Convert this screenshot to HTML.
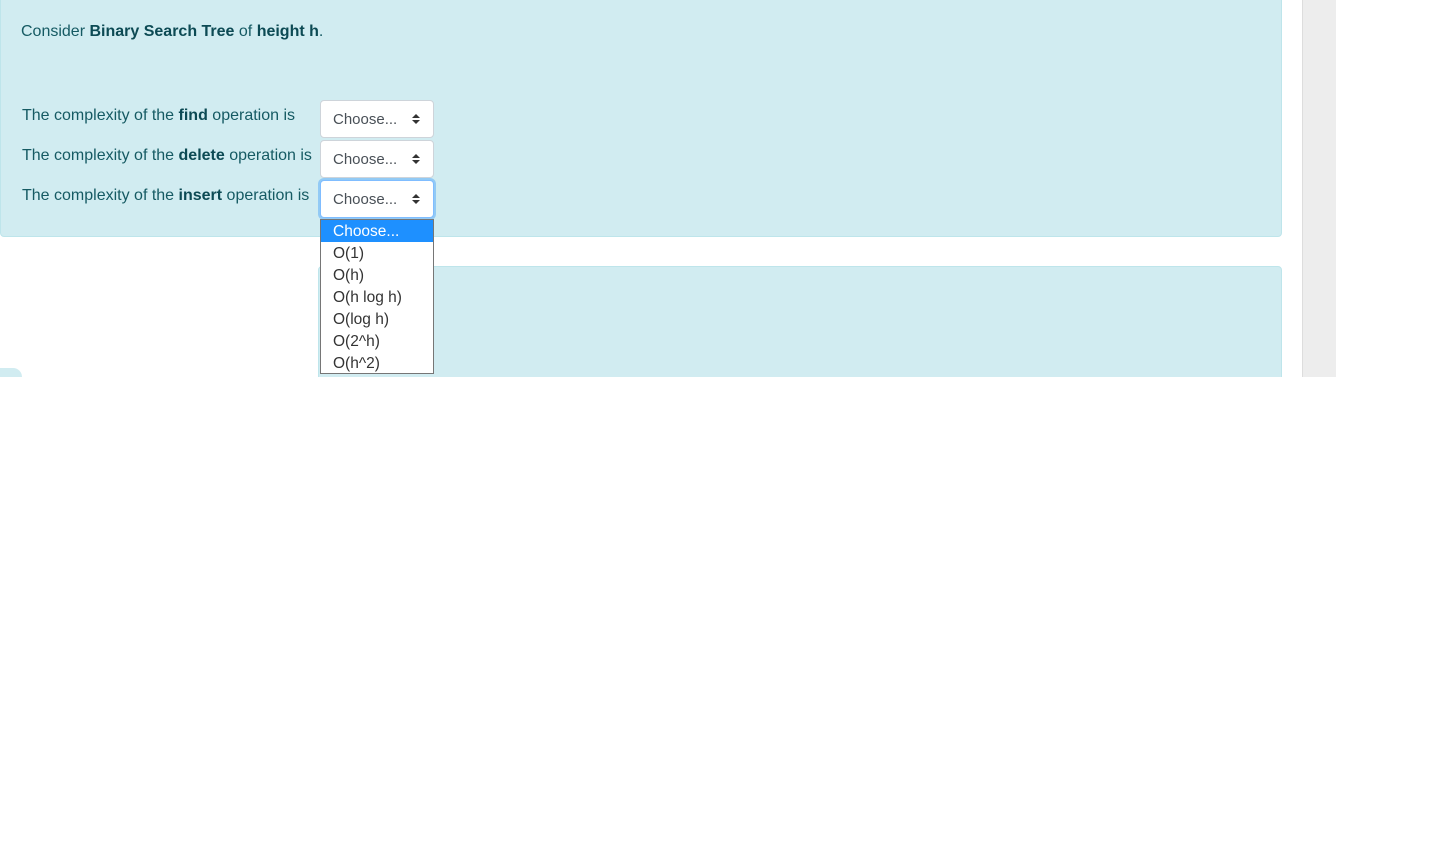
<!DOCTYPE html>
<html><head><style>
body{margin:0;width:1439px;height:853px;background:#fff;font-family:"Liberation Sans",sans-serif;position:relative;overflow:hidden}
.box{position:absolute;background:#d1ecf1;border:1px solid #bee5eb;border-radius:4px;box-sizing:border-box}
.t{position:absolute;color:#155a63;font-size:16px;white-space:nowrap}
.t b{color:#0c4a54}
.sel{position:absolute;left:320px;width:114px;height:38px;background:#fff;border:1px solid #ced4da;border-radius:4px;box-sizing:border-box;font-size:15px;color:#495057;padding:10px 0 0 12px}
.sel:after{content:"";position:absolute;right:13px;top:13px;border:4px solid transparent;border-bottom:4px solid #333;border-top:0}
.sel:before{content:"";position:absolute;right:13px;top:19px;border:4px solid transparent;border-top:4px solid #333;border-bottom:0}
.dd{position:absolute;left:320px;top:219px;width:114px;height:155px;background:#fff;border:1px solid #767676;box-sizing:border-box;font-size:15.5px;color:#333}
.dd div{height:22px;line-height:23px;padding-left:12px}
</style></head><body>
<div class="box" style="left:0;top:-5px;width:1282px;height:242px"></div>
<div class="box" style="left:318px;top:266px;width:964px;height:120px"></div>
<div style="position:absolute;left:1302px;top:0;width:33px;height:377px;background:#ededed;border-left:1px solid #ddd"></div>
<div style="position:absolute;left:0;top:368px;width:22px;height:9px;background:#d1ecf1;border-radius:0 20px 0 0"></div>
<div style="position:absolute;left:0;top:377px;width:1439px;height:476px;background:#fff"></div>
<div class="t" style="left:21px;top:23px">Consider <b>Binary Search Tree</b> of <b>height h</b>.</div>
<div class="t" style="left:22px;top:107px">The complexity of the <b>find</b> operation is</div>
<div class="t" style="left:22px;top:147px">The complexity of the <b>delete</b> operation is</div>
<div class="t" style="left:22px;top:187px">The complexity of the <b>insert</b> operation is</div>
<div class="sel" style="top:100px">Choose...</div>
<div class="sel" style="top:140px">Choose...</div>
<div class="sel" style="top:180px;border-color:#80bdff;box-shadow:0 0 0 2px rgba(0,123,255,.3)">Choose...</div>
<div class="dd">
<div style="background:#1e90ff;color:#fff">Choose...</div>
<div>O(1)</div><div>O(h)</div><div>O(h log h)</div><div>O(log h)</div><div>O(2^h)</div><div>O(h^2)</div>
</div>
</body></html>
